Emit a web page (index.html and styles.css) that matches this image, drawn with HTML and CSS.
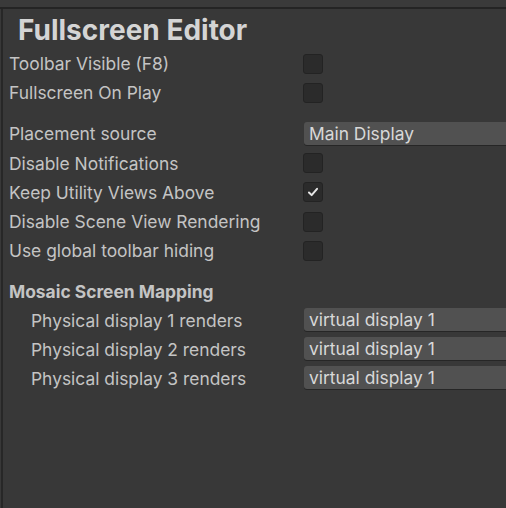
FILE: index.html
```html
<!DOCTYPE html>
<html>
<head>
<meta charset="utf-8">
<link rel="stylesheet" href="styles.css">
</head>
<body>
<div class="topbar"></div>
<div class="panel">
  <h1 class="title">Fullscreen Editor</h1>
  <div class="row"><span class="label">Toolbar Visible (F8)</span><span class="check"></span></div>
  <div class="row"><span class="label">Fullscreen On Play</span><span class="check"></span></div>
  <div class="row gap-top"><span class="label">Placement source</span><span class="dropdown">Main Display</span></div>
  <div class="row"><span class="label">Disable Notifications</span><span class="check"></span></div>
  <div class="row"><span class="label">Keep Utility Views Above</span><span class="check on"><svg viewBox="0 0 20 20" width="20" height="20"><path d="M5.5 10.5 L8.5 13.5 L14.5 6.5" fill="none" stroke="#e6e6e6" stroke-width="2.2" stroke-linecap="round" stroke-linejoin="round"/></svg></span></div>
  <div class="row"><span class="label">Disable Scene View Rendering</span><span class="check"></span></div>
  <div class="row"><span class="label">Use global toolbar hiding</span><span class="check"></span></div>
  <div class="section">Mosaic Screen Mapping</div>
  <div class="row sub"><span class="label">Physical display 1 renders</span><span class="dropdown">virtual display 1</span></div>
  <div class="row sub"><span class="label">Physical display 2 renders</span><span class="dropdown">virtual display 1</span></div>
  <div class="row sub"><span class="label">Physical display 3 renders</span><span class="dropdown">virtual display 1</span></div>
</div>
</body>
</html>
```
FILE: styles.css
```css
html, body {
  margin: 0;
  padding: 0;
  background: #383838;
  width: 506px;
  height: 508px;
  overflow: hidden;
  font-family: Inter, "Noto Sans", sans-serif;
  color: #c4c4c4;
}
.topbar {
  height: 7px;
  background: #3a3a3a;
  border-bottom: 2px solid #242424;
}
.panel {
  border-left: 2px solid #272727;
  margin-left: 1px;
  height: 499px;
  padding-left: 6px;
  box-sizing: border-box;
}
.title {
  margin: 0;
  padding: 4px 0 0 9px;
  height: 40px;
  box-sizing: border-box;
  font-size: 28px;
  font-weight: 700;
  color: #d4d4d4;
  line-height: 34px;
}
.row {
  display: flex;
  align-items: center;
  height: 29.3px;
  font-size: 17.4px;
}
.gap-top { margin-top: 11.5px; }
.label {
  width: 294px;
  flex: none;
  white-space: nowrap;
}
.sub .label { padding-left: 22px; width: 272px; padding-top: 2px; }
.check {
  width: 18px;
  height: 18px;
  border: 1px solid #232323;
  border-radius: 3px;
  background: #2b2b2b;
  flex: none;
  display: flex;
  align-items: center;
  justify-content: center;
}
.check svg { display: block; }
.dropdown {
  flex: 1;
  height: 23px;
  background: #515151;
  border-radius: 3px 0 0 3px;
  margin-left: 1px;
  padding-left: 5px;
  line-height: 23px;
  color: #d8d8d8;
  box-shadow: 0 1px 0 #262626;
  white-space: nowrap;
}
.section {
  margin-top: 12px;
  font-size: 17.4px;
  font-weight: 700;
  height: 27px;
  line-height: 28px;
  color: #c4c4c4;
}
```
